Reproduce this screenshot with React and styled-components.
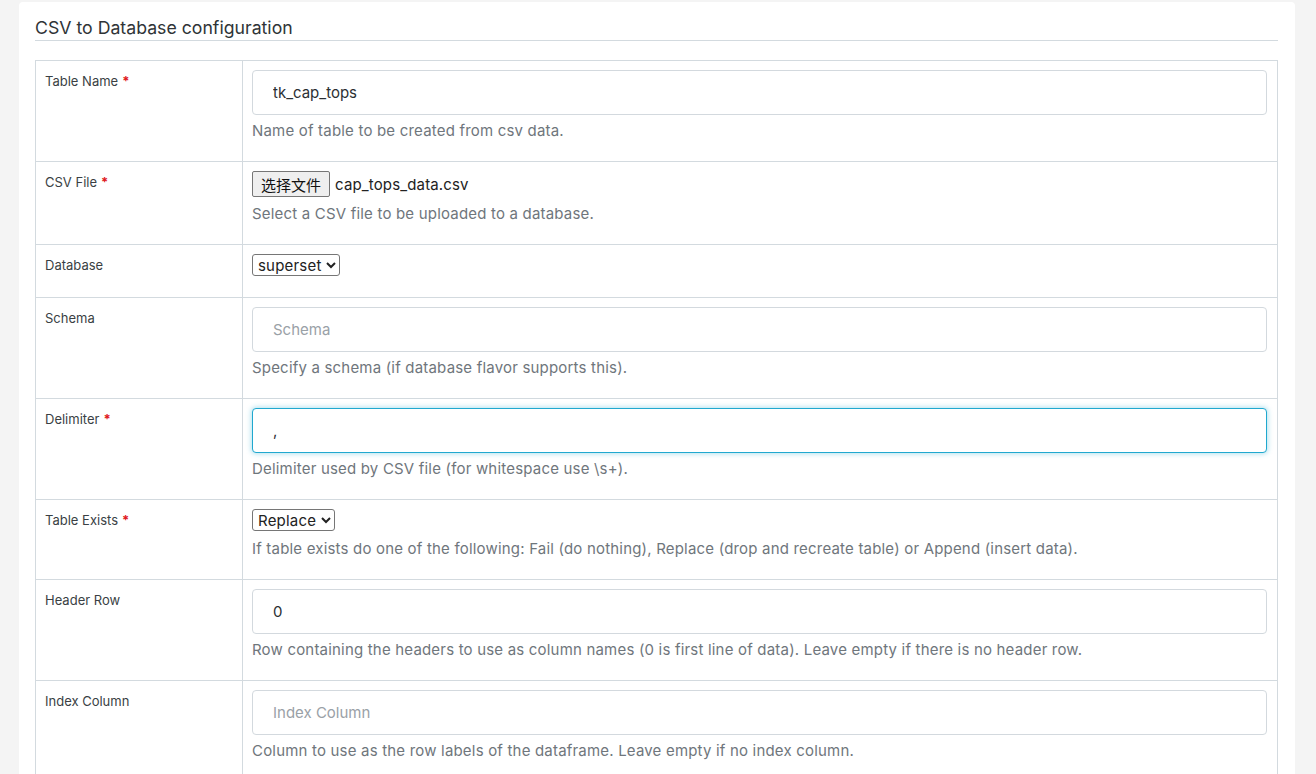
import React from "react";
import styled, { createGlobalStyle } from "styled-components";

const GlobalStyle = createGlobalStyle`
  html, body {
    margin: 0;
    padding: 0;
    background: #f4f4f4;
    font-family: Inter, "Noto Sans", "Noto Sans CJK SC", sans-serif;
    color: #333;
  }
`;

const Page = styled.div`
  padding: 2px 21px 0 19px;
  height: 772px;
  overflow: hidden;
`;

const Panel = styled.div`
  background: #fff;
  border-radius: 4px;
  padding: 14px 17px 20px 16px;
  min-height: 900px;
`;

const Title = styled.h4`
  margin: 0;
  font-size: 17.7px;
  font-weight: 400;
  line-height: 24px;
  color: #2f3437;
  border-bottom: 1px solid #d3dadf;
`;

const FormTable = styled.table`
  width: 100%;
  margin-top: 19px;
  border-collapse: collapse;
  table-layout: fixed;
`;

const LabelCell = styled.td`
  width: 187px;
  padding: 10px 10px 10px 9px;
  vertical-align: top;
  border: 1px solid #d3dadf;
  font-size: 13px;
  line-height: 20px;
  color: #3a3f44;
`;

const FieldCell = styled.td`
  padding: 9px 10px 20px 9px;
  vertical-align: top;
  border: 1px solid #d3dadf;
`;

const Required = styled.span`
  color: #e0191c;
  font-weight: 700;
  margin-left: 4px;
`;

const TextInput = styled.input`
  display: block;
  box-sizing: border-box;
  width: 100%;
  height: 45px;
  padding: 0 20px;
  border: 1px solid ${(p) => (p.$focused ? "#20a8cf" : "#d3d9de")};
  border-radius: 4px;
  box-shadow: ${(p) => (p.$focused ? "0 0 5px 1px rgba(32, 168, 207, 0.35)" : "none")};
  font-family: Inter, "Noto Sans", sans-serif;
  font-size: 15px;
  color: #2b2f33;
  outline: none;
  &::placeholder {
    color: #9aa1a7;
  }
`;

const Help = styled.div`
  margin-top: ${(p) => p.$gap || 6}px;
  font-size: 15px;
  letter-spacing: 0.19px;
  line-height: 20px;
  color: #6f767c;
`;

const NativeSelect = styled.select`
  display: block;
  height: 22px;
  padding: 0 1px;
  margin-bottom: 1px;
  border: 1px solid #767676;
  border-radius: 3px;
  background: #fff;
  font-family: Inter, "Noto Sans", sans-serif;
  font-size: 15px;
  letter-spacing: 0.2px;
  color: #222;
`;

const FileRow = styled.div`
  display: flex;
  align-items: center;
  gap: 5px;
  height: 26px;
`;

const FileButton = styled.button`
  height: 26px;
  padding: 0 8px;
  border: 1px solid #767676;
  border-radius: 2px;
  background: #efefef;
  font-family: "Noto Sans CJK SC", sans-serif;
  font-size: 15px;
  color: #111;
`;

const FileName = styled.span`
  font-size: 15px;
  letter-spacing: 0.15px;
  color: #222;
`;

const fields = [
  { label: "Table Name", required: true, kind: "input", value: "tk_cap_tops", help: "Name of table to be created from csv data." },
  { label: "CSV File", required: true, kind: "file", help: "Select a CSV file to be uploaded to a database." },
  { label: "Database", kind: "select", options: ["superset"] },
  { label: "Schema", kind: "input", placeholder: "Schema", help: "Specify a schema (if database flavor supports this)." },
  { label: "Delimiter", required: true, kind: "input", value: ",", focused: true, help: "Delimiter used by CSV file (for whitespace use \\s+)." },
  {
    label: "Table Exists",
    required: true,
    kind: "select",
    options: ["Replace", "Fail", "Append"],
    help: "If table exists do one of the following: Fail (do nothing), Replace (drop and recreate table) or Append (insert data).",
  },
  {
    label: "Header Row",
    kind: "input",
    value: "0",
    help: "Row containing the headers to use as column names (0 is first line of data). Leave empty if there is no header row.",
  },
  {
    label: "Index Column",
    kind: "input",
    placeholder: "Index Column",
    help: "Column to use as the row labels of the dataframe. Leave empty if no index column.",
  },
];

function Field({ field }) {
  if (field.kind === "file") {
    return (
      <>
        <FileRow>
          <FileButton type="button">选择文件</FileButton>
          <FileName>cap_tops_data.csv</FileName>
        </FileRow>
        <Help $gap={7}>{field.help}</Help>
      </>
    );
  }
  if (field.kind === "select") {
    return (
      <>
        <NativeSelect defaultValue={field.options[0]}>
          {field.options.map((o) => (
            <option key={o}>{o}</option>
          ))}
        </NativeSelect>
        {field.help && <Help $gap={8}>{field.help}</Help>}
      </>
    );
  }
  return (
    <>
      <TextInput
        type="text"
        defaultValue={field.value}
        placeholder={field.placeholder}
        $focused={field.focused}
      />
      <Help>{field.help}</Help>
    </>
  );
}

export default function App() {
  return (
    <>
      <GlobalStyle />
      <Page>
        <Panel>
          <Title>CSV to Database configuration</Title>
          <FormTable>
            <tbody>
              {fields.map((f) => (
                <tr key={f.label}>
                  <LabelCell>
                    {f.label}
                    {f.required && <Required>*</Required>}
                  </LabelCell>
                  <FieldCell>
                    <Field field={f} />
                  </FieldCell>
                </tr>
              ))}
            </tbody>
          </FormTable>
        </Panel>
      </Page>
    </>
  );
}
